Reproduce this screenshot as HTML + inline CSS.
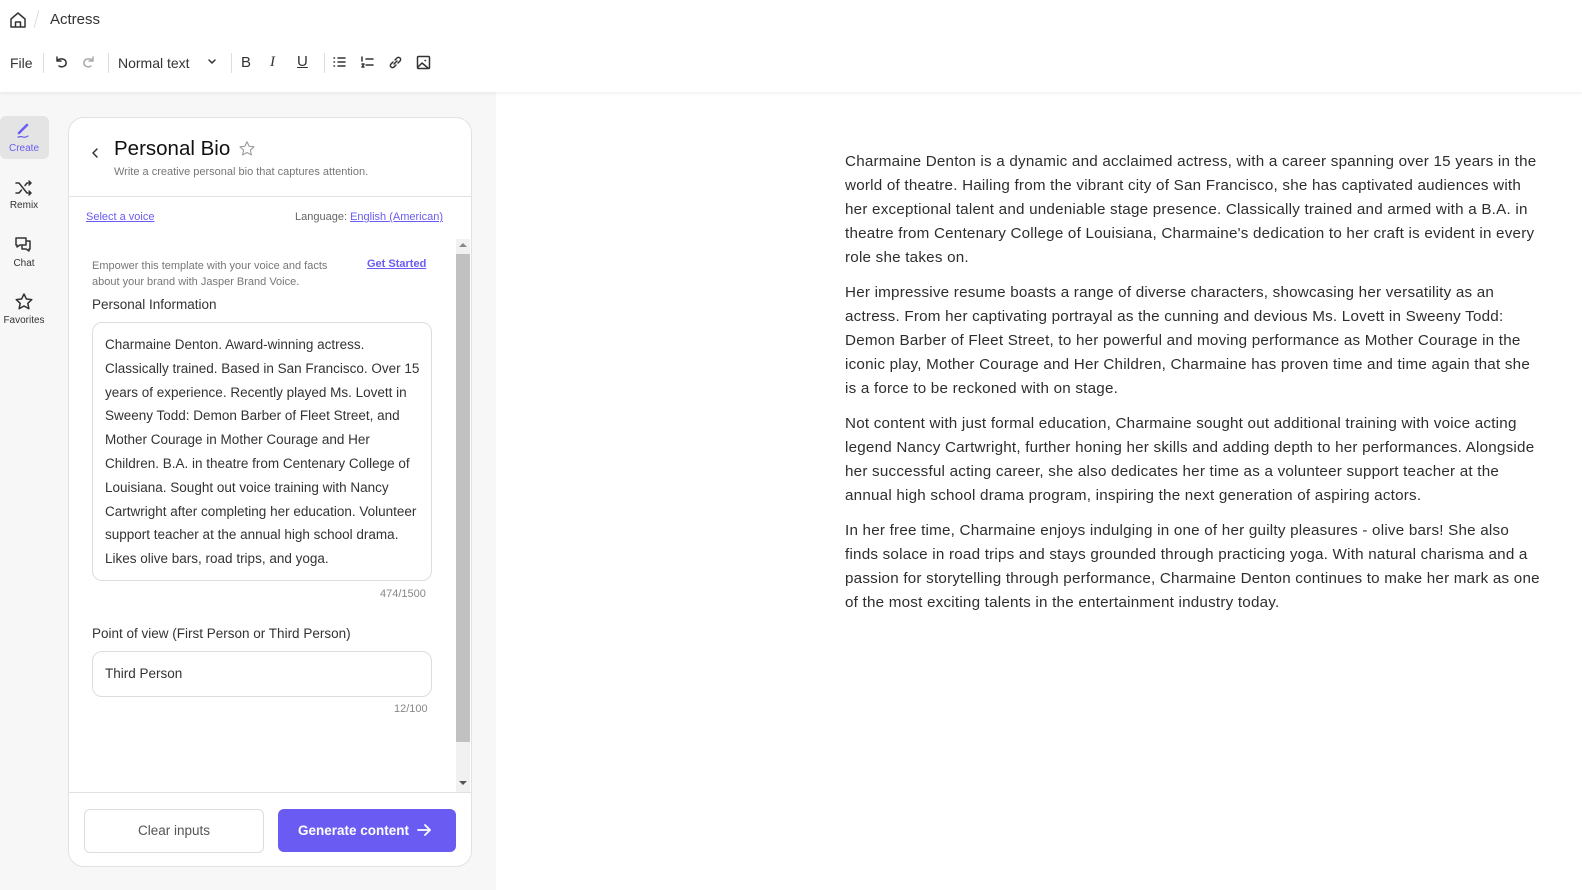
<!DOCTYPE html>
<html><head><meta charset="utf-8"><style>
*{box-sizing:border-box;margin:0;padding:0}
body{width:1582px;height:890px;overflow:hidden;font-family:"Liberation Sans",sans-serif;color:#222;background:#fff;position:relative}
.top{position:absolute;left:0;top:0;width:1582px;height:92px;background:#fff;box-shadow:0 1px 4px rgba(0,0,0,.08);z-index:2}
.left{position:absolute;left:0;top:92px;width:496px;height:798px;background:#f7f7f7}
.ab{position:absolute}
svg{position:absolute;fill:none;stroke:#333;stroke-width:1.5;stroke-linecap:round;stroke-linejoin:round}
.nav{position:absolute;left:0;width:48px;text-align:center;font-size:10px;color:#333}
.card{position:absolute;left:68px;top:117px;width:404px;height:750px;background:#fff;border:1px solid #e2e2e2;border-radius:16px;overflow:hidden}
.lnk{color:#6a5cf2;text-decoration:underline}
.ta{position:absolute;left:23px;width:340px;border:1px solid #ddd;border-radius:10px;font-size:13.5px;color:#333}
.doc{position:absolute;left:845px;top:150px;width:700px;font-size:15.2px;line-height:24px;color:#2e2e2e;letter-spacing:0.22px}
.doc p{margin-bottom:11px}
</style></head><body>
<div class="top">
<svg style="left:9px;top:11px" width="18" height="18" viewBox="0 0 18 18"><path d="M2 8L9 2l7 6v8H2z M6.5 16v-5h5v5"/></svg>
<div class="ab" style="left:36px;top:10px;width:1px;height:18px;background:#ddd;transform:rotate(15deg)"></div>
<div class="ab" style="left:50px;top:11px;font-size:15px;color:#333">Actress</div>
<div class="ab" style="left:10px;top:55px;font-size:14px;color:#333">File</div>
<div class="ab" style="left:43px;top:53px;width:1px;height:20px;background:#ddd"></div>
<svg style="left:54px;top:55px" width="14" height="14" viewBox="0 0 14 14"><path d="M3 2v4h4 M3 6c2-3 8-3 9 1s-4 6-7 4"/></svg>
<svg style="left:82px;top:55px;stroke:#aaa" width="14" height="14" viewBox="0 0 14 14"><path d="M11 2v4H7 M11 6C9 3 3 3 2 7s4 6 7 4"/></svg>
<div class="ab" style="left:108px;top:53px;width:1px;height:20px;background:#ddd"></div>
<div class="ab" style="left:118px;top:55px;font-size:14px;color:#333">Normal text</div>
<svg style="left:207px;top:58px" width="10" height="8" viewBox="0 0 10 8"><path d="M2 2l3 3 3-3"/></svg>
<div class="ab" style="left:231px;top:53px;width:1px;height:20px;background:#ddd"></div>
<div class="ab" style="left:241px;top:54px;font-size:15px;color:#333">B</div>
<div class="ab" style="left:270px;top:54px;font-size:15px;color:#333;font-style:italic;font-family:'Liberation Serif'">I</div>
<div class="ab" style="left:297px;top:53px;font-size:15px;color:#333;text-decoration:underline">U</div>
<div class="ab" style="left:324px;top:53px;width:1px;height:20px;background:#ddd"></div>
<svg style="left:332px;top:55px" width="15" height="14" viewBox="0 0 15 14"><path d="M2 3h.5M2 7h.5M2 11h.5M6 3h7M6 7h7M6 11h7"/></svg>
<svg style="left:360px;top:55px" width="15" height="14" viewBox="0 0 15 14"><path d="M2 2v4M2 9h2l-2 3h2M6 4h7M6 10h7"/></svg>
<svg style="left:388px;top:55px" width="15" height="15" viewBox="0 0 15 15"><path d="M6 9l3-3M5 7l-2 2a2 2 0 003 3l2-2M10 8l2-2a2 2 0 00-3-3L7 5"/></svg>
<svg style="left:416px;top:55px" width="15" height="15" viewBox="0 0 15 15"><rect x="1.5" y="1.5" width="12" height="12" rx="1"/><path d="M2 12l4-4 6 5M9 5.5h.5"/></svg>
</div>
<div class="left"></div>
<div class="ab" style="left:0;top:116px;width:49px;height:43px;background:#e4e4e4;border-radius:6px"></div>
<svg style="left:15px;top:121px;stroke:#6a5cf2;stroke-width:2.5" width="18" height="18" viewBox="0 0 18 18"><path d="M4 12L12 4"/><path d="M3 16c2 0 3-1 5 0s3 0 5-1" stroke-width="1.2"/></svg>
<div class="nav" style="top:143px;color:#6a5cf2">Create</div>
<svg style="left:14px;top:179px" width="20" height="18" viewBox="0 0 20 18"><path d="M2 4h3l8 10h4M2 14h3l2.5-3M11 6.5L13 4h4M15 2l2 2-2 2M15 12l2 2-2 2"/></svg>
<div class="nav" style="top:200px">Remix</div>
<svg style="left:13px;top:235px" width="22" height="20" viewBox="0 0 22 20"><path d="M3 3h10v7H7l-3 2v-2H3z M13 6h4v8h-1v2l-3-2H9v-4"/></svg>
<div class="nav" style="top:258px">Chat</div>
<svg style="left:14px;top:292px" width="20" height="19" viewBox="0 0 20 19"><path d="M10 2l2.4 5 5.4.6-4 3.7 1.1 5.4L10 14l-4.9 2.7 1.1-5.4-4-3.7 5.4-.6z"/></svg>
<div class="nav" style="top:315px">Favorites</div>

<div class="card">
<svg style="left:21px;top:29px" width="10" height="12" viewBox="0 0 10 12"><path d="M7 2L3 6l4 4"/></svg>
<div class="ab" style="left:45px;top:19px;font-size:20.5px;color:#111">Personal Bio</div>
<svg style="left:169px;top:22px;stroke:#999;stroke-width:1.2" width="18" height="17" viewBox="0 0 20 19"><path d="M10 2l2.4 5 5.4.6-4 3.7 1.1 5.4L10 14l-4.9 2.7 1.1-5.4-4-3.7 5.4-.6z"/></svg>
<div class="ab" style="left:45px;top:48px;font-size:11px;color:#777">Write a creative personal bio that captures attention.</div>
<div class="ab" style="left:0;top:78px;width:404px;height:1px;background:#e2e2e2"></div>
<div class="ab lnk" style="left:17px;top:93px;font-size:11px">Select a voice</div>
<div class="ab" style="left:226px;top:93px;font-size:11px;color:#666">Language: <span class="lnk">English (American)</span></div>
<div class="ab" style="left:387px;top:121px;width:14px;height:553px;background:#f1f1f1"></div>
<div class="ab" style="left:387px;top:136px;width:14px;height:488px;background:#c1c1c1"></div>
<div class="ab" style="left:390px;top:125px;border:4px solid transparent;border-bottom:4px solid #888;border-top:0"></div>
<div class="ab" style="left:390px;top:663px;border:4px solid transparent;border-top:4px solid #555;border-bottom:0"></div>
<div class="ab" style="left:23px;top:140px;font-size:11px;color:#777;line-height:16px;width:265px">Empower this template with your voice and facts about your brand with Jasper Brand Voice.</div>
<div class="ab lnk" style="left:298px;top:140px;font-size:11px;font-weight:bold">Get Started</div>
<div class="ab" style="left:23px;top:179px;font-size:13.5px;color:#333">Personal Information</div>
<div class="ta" style="top:204px;height:259px;padding:10px 6px 10px 12px;line-height:23.8px">Charmaine Denton. Award-winning actress. Classically trained. Based in San Francisco. Over 15 years of experience. Recently played Ms. Lovett in Sweeny Todd: Demon Barber of Fleet Street, and Mother Courage in Mother Courage and Her Children. B.A. in theatre from Centenary College of Louisiana. Sought out voice training with Nancy Cartwright after completing her education. Volunteer support teacher at the annual high school drama. Likes olive bars, road trips, and yoga.</div>
<div class="ab" style="left:311px;top:470px;font-size:11px;color:#888">474/1500</div>
<div class="ab" style="left:23px;top:508px;font-size:13.5px;color:#333">Point of view (First Person or Third Person)</div>
<div class="ta" style="top:533px;height:46px;padding:14px 12px">Third Person</div>
<div class="ab" style="left:325px;top:585px;font-size:11px;color:#888">12/100</div>
<div class="ab" style="left:0;top:674px;width:404px;height:1px;background:#e2e2e2"></div>
<div class="ab" style="left:15px;top:691px;width:180px;height:44px;border:1px solid #ddd;border-radius:6px;font-size:13.5px;color:#555;text-align:center;line-height:42px">Clear inputs</div>
<div class="ab" style="left:209px;top:691px;width:178px;height:43px;background:#6a5cf2;border-radius:6px;font-size:13.5px;color:#fff;font-weight:bold;line-height:43px;padding-left:20px">Generate content</div>
<svg style="left:347px;top:705px;stroke:#fff;stroke-width:1.8" width="16" height="14" viewBox="0 0 16 14"><path d="M2 7h12M9 2l5 5-5 5"/></svg>
</div>

<div class="doc">
<p>Charmaine Denton is a dynamic and acclaimed actress, with a career spanning over 15 years in the world of theatre. Hailing from the vibrant city of San Francisco, she has captivated audiences with her exceptional talent and undeniable stage presence. Classically trained and armed with a B.A. in theatre from Centenary College of Louisiana, Charmaine's dedication to her craft is evident in every role she takes on.</p>
<p>Her impressive resume boasts a range of diverse characters, showcasing her versatility as an actress. From her captivating portrayal as the cunning and devious Ms. Lovett in Sweeny Todd: Demon Barber of Fleet Street, to her powerful and moving performance as Mother Courage in the iconic play, Mother Courage and Her Children, Charmaine has proven time and time again that she is a force to be reckoned with on stage.</p>
<p>Not content with just formal education, Charmaine sought out additional training with voice acting legend Nancy Cartwright, further honing her skills and adding depth to her performances. Alongside her successful acting career, she also dedicates her time as a volunteer support teacher at the annual high school drama program, inspiring the next generation of aspiring actors.</p>
<p>In her free time, Charmaine enjoys indulging in one of her guilty pleasures - olive bars! She also finds solace in road trips and stays grounded through practicing yoga. With natural charisma and a passion for storytelling through performance, Charmaine Denton continues to make her mark as one of the most exciting talents in the entertainment industry today.</p>
</div>
</body></html>
